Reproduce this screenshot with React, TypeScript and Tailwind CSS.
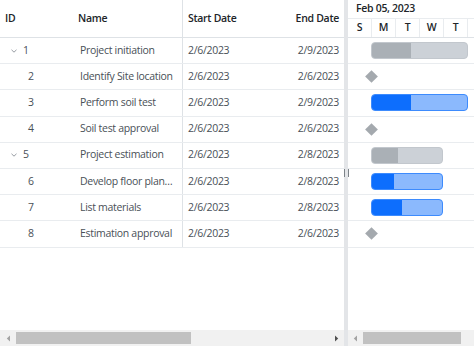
import React from "react";

type Row = {
  id: number;
  name: string;
  start: string;
  end: string;
  parent?: boolean;
  kind: "gray" | "blue" | "milestone";
  width?: number;
  progress?: number;
};

const rows: Row[] = [
  { id: 1, name: "Project initiation", start: "2/6/2023", end: "2/9/2023", parent: true, kind: "gray", width: 97, progress: 39 },
  { id: 2, name: "Identify Site location", start: "2/6/2023", end: "2/6/2023", kind: "milestone" },
  { id: 3, name: "Perform soil test", start: "2/6/2023", end: "2/9/2023", kind: "blue", width: 97, progress: 39 },
  { id: 4, name: "Soil test approval", start: "2/6/2023", end: "2/6/2023", kind: "milestone" },
  { id: 5, name: "Project estimation", start: "2/6/2023", end: "2/8/2023", parent: true, kind: "gray", width: 72, progress: 26 },
  { id: 6, name: "Develop floor plan for estimation", start: "2/6/2023", end: "2/8/2023", kind: "blue", width: 72, progress: 22 },
  { id: 7, name: "List materials", start: "2/6/2023", end: "2/8/2023", kind: "blue", width: 72, progress: 30 },
  { id: 8, name: "Estimation approval", start: "2/6/2023", end: "2/6/2023", kind: "milestone" },
];

const days = ["S", "M", "T", "W", "T", ""];

function Chevron() {
  return (
    <svg width="8" height="8" viewBox="0 0 8 8" className="mr-[5px]">
      <path d="M1.5 2.8 L4 5.2 L6.5 2.8" fill="none" stroke="#8a9097" strokeWidth="0.9" />
    </svg>
  );
}

function Bar({ r }: { r: Row }) {
  if (r.kind === "milestone") {
    return (
      <div className="absolute left-[19px] top-[8px] h-[9px] w-[9px] rotate-45 bg-[#a4a9ae]" />
    );
  }
  const gray = r.kind === "gray";
  return (
    <div
      className={
        "absolute left-[23px] top-[4px] h-[17px] overflow-hidden rounded-[4px] border " +
        (gray ? "border-[#c2c7cd] bg-[#ccd1d7]" : "border-[#3d8bfd] bg-[#8bb9fd]")
      }
      style={{ width: r.width }}
    >
      <div
        className={"h-full " + (gray ? "bg-[#aab0b6]" : "bg-[#0d6efd]")}
        style={{ width: r.progress }}
      />
    </div>
  );
}

export default function App() {
  return (
    <div
      className="flex h-[346px] w-[474px] overflow-hidden bg-white text-[10.5px] tracking-[-0.3px] text-[#495057]"
      style={{ fontFamily: '"Open Sans", "Noto Sans", sans-serif' }}
    >
      {/* Left grid */}
      <div className="flex w-[344px] flex-col">
        <div className="flex h-[38px] items-center border-b border-[#dee2e6] font-semibold text-[#212529]">
          <div className="w-[72px] pl-[5px]">ID</div>
          <div className="w-[110px] pl-[6px]">Name</div>
          <div className="flex h-full w-[82px] items-center border-l border-[#dee2e6] pl-[5px]">Start Date</div>
          <div className="flex-1 pr-[5px] text-right">End Date</div>
        </div>
        {rows.map((r) => (
          <div key={r.id} className="flex h-[26.2px] items-center border-b border-[#e9ecef]">
            <div className="flex w-[72px] items-center">
              {r.parent ? (
                <div className="flex items-center pl-[10px]">
                  <Chevron />
                  <span>{r.id}</span>
                </div>
              ) : (
                <span className="pl-[28px]">{r.id}</span>
              )}
            </div>
            <div className="w-[110px] truncate pl-[8px] pr-[8px]">{r.name}</div>
            <div className="flex h-full w-[82px] items-center border-l border-[#dee2e6] pl-[5px]">{r.start}</div>
            <div className="flex-1 pr-[5px] text-right">{r.end}</div>
          </div>
        ))}
        <div className="flex-1" />
        <div className="flex h-[16px] items-center bg-[#f1f1f1]">
          <div className="flex w-[16px] justify-center">
            <svg width="5" height="7" viewBox="0 0 5 7">
              <path d="M4 0.5 L0.8 3.5 L4 6.5 Z" fill="#a3a3a3" />
            </svg>
          </div>
          <div className="h-[12px] w-[175px] bg-[#c1c1c1]" />
          <div className="flex-1" />
          <div className="flex w-[16px] justify-center">
            <svg width="5" height="7" viewBox="0 0 5 7">
              <path d="M1 0.5 L4.2 3.5 L1 6.5 Z" fill="#505050" />
            </svg>
          </div>
        </div>
      </div>

      {/* Splitter */}
      <div className="relative w-[4px] bg-[#e3e5e8]">
        <div className="absolute left-0 top-[169px] h-[8px] w-[1px] bg-[#7d8389]" />
        <div className="absolute left-[4px] top-[169px] h-[8px] w-[1px] bg-[#7d8389]" />
      </div>

      {/* Gantt chart */}
      <div className="flex flex-1 flex-col overflow-hidden">
        <div className="flex h-[38px] flex-col border-b border-[#dee2e6] font-semibold text-[#212529]">
          <div className="flex h-[19px] items-center border-b border-[#e9ecef] pl-[8px] whitespace-nowrap">Feb 05, 2023</div>
          <div className="flex flex-1">
            {days.map((d, i) => (
              <div
                key={i}
                className="flex w-[24px] shrink-0 items-center justify-center border-r border-[#e9ecef]"
              >
                {d}
              </div>
            ))}
          </div>
        </div>
        {rows.map((r) => (
          <div key={r.id} className="relative h-[26.2px] border-b border-[#e9ecef]">
            <Bar r={r} />
          </div>
        ))}
        <div className="flex-1" />
        <div className="flex h-[16px] items-center bg-[#f1f1f1]">
          <div className="flex w-[15px] justify-center">
            <svg width="5" height="7" viewBox="0 0 5 7">
              <path d="M4 0.5 L0.8 3.5 L4 6.5 Z" fill="#a3a3a3" />
            </svg>
          </div>
          <div className="h-[12px] w-[98px] bg-[#c1c1c1]" />
        </div>
      </div>
    </div>
  );
}
